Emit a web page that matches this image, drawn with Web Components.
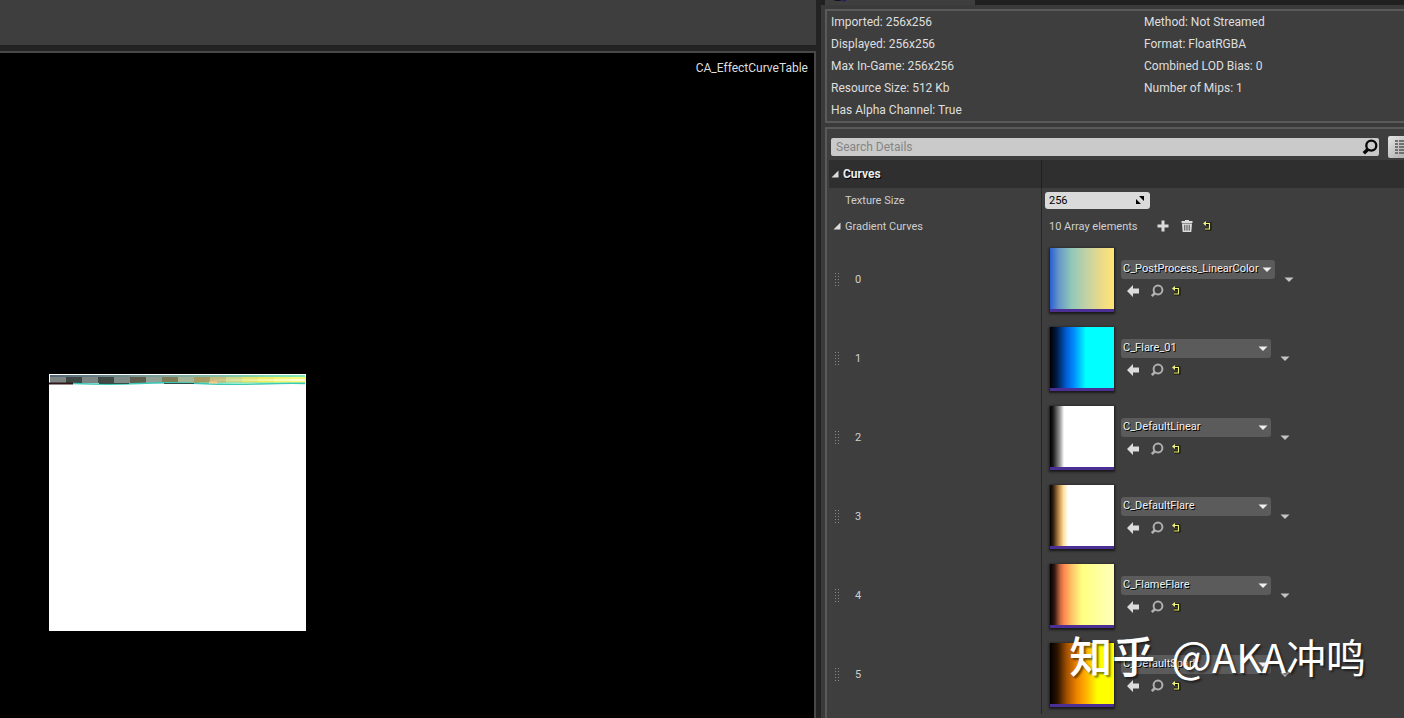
<!DOCTYPE html>
<html lang="en">
<head>
<meta charset="utf-8">
<title>CA_EffectCurveTable</title>
<style>
  html, body {
    margin: 0;
    height: 100%;
  }

  body {
    overflow: hidden;
    background: #232323;
    color: #dedede;
    font-family: Roboto, "Noto Sans CJK SC", sans-serif;
    font-size: 12px;
  }

  .brand {
    margin-right: 7px;
    font-size: 43px;
    font-weight: 500;
  }

  .at { font-size: 43px; }
</style>
</head>
<body>
<texture-editor>
  <texture-viewport slot="viewport" label="CA_EffectCurveTable"></texture-viewport>
  <texture-info slot="side">
    <span>Imported: 256x256</span>
    <span>Method: Not Streamed</span>
    <span>Displayed: 256x256</span>
    <span>Format: FloatRGBA</span>
    <span>Max In-Game: 256x256</span>
    <span>Combined LOD Bias: 0</span>
    <span>Resource Size: 512 Kb</span>
    <span>Number of Mips: 1</span>
    <span>Has Alpha Channel: True</span>
  </texture-info>
  <details-panel slot="side">
    <category-row>Curves</category-row>
    <property-row>
      <span slot="name">Texture Size</span>
      <number-box name="Texture Size" value="256"></number-box>
    </property-row>
    <property-row expandable>
      <span slot="name">Gradient Curves</span>
      <array-tools>10 Array elements</array-tools>
    </property-row>
    <curve-row index="0" curve="C_PostProcess_LinearColor" gradient="#2a5fd0, #6797c8 14%, #92c8b8 34%, #c4d2a4 58%, #eedc85 82%, #ffe574"></curve-row>
    <curve-row index="1" curve="C_Flare_01" gradient="#000, #001a40 10%, #0060d8 26%, #0090ff 38%, #00ffff 56%"></curve-row>
    <curve-row index="2" curve="C_DefaultLinear" gradient="#000, #1c1c1c 5%, #a0a0a0 16%, #fff 22%"></curve-row>
    <curve-row index="3" curve="C_DefaultFlare" gradient="#000, #302010 5%, #c08c4c 14%, #ffdf98 21%, #fff 28%"></curve-row>
    <curve-row index="4" curve="C_FlameFlare" gradient="#000, #301810 7%, #c86840 16%, #ff8850 22%, #ffc468 34%, #ffff80 50%, #ffffa0 76%, #ffffb8"></curve-row>
    <curve-row index="5" curve="C_DefaultSpark" gradient="#000, #301400 12%, #a05000 26%, #f08400 42%, #ffb000 56%, #ffff00 74%"></curve-row>
  </details-panel>
</texture-editor>
<water-mark><span class="brand">知乎</span> <span class="at">@</span>AKA冲鸣</water-mark>

<script>
const ICONS = {
  search: '<svg viewBox="0 0 16 16" width="16" height="16"><circle cx="9.3" cy="6.6" r="5" fill="none" stroke="currentColor" stroke-width="2.3"/><path d="M6 10.2 1.8 14.2" stroke="currentColor" stroke-width="3.4"/></svg>',
  find: '<svg viewBox="0 0 14 14" width="14" height="14"><circle cx="8" cy="6" r="4.4" fill="none" stroke="#b0b0b0" stroke-width="2"/><path d="M5 9 1.8 12.2" stroke="#b0b0b0" stroke-width="2.6"/></svg>',
  use: '<svg viewBox="0 0 14 14" width="14" height="14"><path d="M1 7 7 1V4.4H13V9.6H7V13Z" fill="currentColor"/></svg>',
  reset: '<svg viewBox="0 0 10 10" width="10" height="10"><path d="M3 3H8V8H3" fill="none" stroke="#141405" stroke-width="3"/><path d="M2 2.5H7.5V8H3" fill="none" stroke="#eef27c" stroke-width="1.2"/><path d="M4 0V5L1 2.5Z" fill="#eef27c"/></svg>',
  plus: '<svg viewBox="0 0 12 12" width="12" height="12"><path d="M4.5 .5H7.5V4.5H11.5V7.5H7.5V11.5H4.5V7.5H.5V4.5H4.5Z" fill="currentColor"/></svg>',
  trash: '<svg viewBox="0 0 12 14" width="12" height="14"><path d="M4 1H8V2H11.5V4H.5V2H4Z" fill="currentColor"/><path d="M1 4.6H11L10.3 13H1.7Z" fill="currentColor"/><path d="M3.8 5.8V11.6M6 5.8V11.6M8.2 5.8V11.6" stroke="#444"/></svg>',
  down: '<svg viewBox="0 0 10 6" width="10" height="6"><path d="M.5 .5H9.5L5 5Z" fill="currentColor"/></svg>',
  open: '<svg viewBox="0 0 8 8" width="8" height="8"><path d="M7.5 .5V7.5H.5Z" fill="currentColor"/></svg>',
  spin: '<svg viewBox="0 0 10 10" width="10" height="10"><path d="M4 1H9V6ZM1 4V9H6Z" fill="currentColor"/></svg>',
  list: '<svg viewBox="0 0 10 16" width="10" height="16"><path d="M1 2H4M1 5H4M1 8H4M1 11H4M1 14H4M5 2H10M5 5H10M5 8H10M5 11H10M5 14H10" stroke="#707070" stroke-width="2"/></svg>',
  grip: '<svg viewBox="0 0 5 14" width="5" height="14"><path d="M.5 0V14M3.5 0V14" stroke="#8a8a8a" stroke-dasharray="1 2"/></svg>'
};

const BUTTON_CSS = `
  button {
    display: flex;
    align-items: center;
    justify-content: center;
    margin: 0;
    padding: 0;
    border: 0;
    background: none;
    color: #dcdcdc;
  }
  svg { display: block; }
`;

class BaseElement extends HTMLElement {
  constructor() {
    super();
    this.attachShadow({ mode: 'open' });
  }

  connectedCallback() {
    this.shadowRoot.innerHTML = this.template();
  }
}

class TextureEditor extends BaseElement {
  template() {
    return `
      <style>
        :host {
          display: grid;
          grid-template-columns: minmax(0, 1fr) 583px;
          gap: 5px;
          height: 100vh;
        }
        main {
          display: flex;
          flex-direction: column;
          gap: 6px;
          min-width: 0;
        }
        .toolbar {
          height: 45px;
          background: #3e3e3e;
        }
        aside {
          display: flex;
          flex-direction: column;
          min-width: 0;
          min-height: 0;
          background: #3a3a3a;
        }
        .tabs {
          height: 5px;
          padding-left: 4px;
          background: #202020;
        }
        .tab {
          width: 150px;
          height: 5px;
          background: #3e3e3e;
        }
        .tab svg { display: block; margin-left: 8px; }
        .panels {
          display: flex;
          flex: 1;
          flex-direction: column;
          gap: 4px;
          min-height: 0;
          padding: 4px 0 0 4px;
        }
      </style>
      <main>
        <div class="toolbar"></div>
        <slot name="viewport"></slot>
      </main>
      <aside>
        <div class="tabs"><div class="tab">
          <svg viewBox="0 0 14 3" width="14" height="3"><path d="M0 0H7L9 1H3Z" fill="#131320"/><path d="M8 0H14L11 2Z" fill="#29245c"/></svg>
        </div></div>
        <div class="panels"><slot name="side"></slot></div>
      </aside>
    `;
  }
}

class TextureViewport extends BaseElement {
  // alternating 16px cells that brighten toward yellow on the right
  cells() {
    const colors = ['#7d8484', '#3f4746', '#7b8583', '#414944', '#7f8c88', '#5f5d4c', '#90a196', '#7f7c58',
      '#a5b597', '#a79c62', '#c5bd7d', '#cfd888', '#e3e56c', '#eeee66', '#f4f573', '#f7fa7c'];
    return colors.map((c, i) => `<rect x="${i * 16 + 1}" y="2" width="16" height="7" fill="${c}"/>`).join('');
  }

  template() {
    return `
      <style>
        :host {
          display: flex;
          flex: 1;
          flex-direction: column;
          min-height: 0;
          border: solid #484848;
          border-width: 2px 2px 0 0;
          background: #000;
        }
        .label {
          padding: 7px 6px 0 0;
          line-height: 16px;
          text-align: right;
        }
        svg { margin: 298px 0 0 49px; }
      </style>
      <div class="label">${this.getAttribute('label')}</div>
      <svg viewBox="0 0 257 257" width="257" height="257">
        <defs>
          <linearGradient id="line"><stop stop-color="#567"/><stop offset=".5" stop-color="#80aaa0"/><stop offset="1" stop-color="#80efba"/></linearGradient>
          <linearGradient id="glow"><stop offset=".6" stop-color="#fff" stop-opacity="0"/><stop offset="1" stop-color="#fff" stop-opacity=".7"/></linearGradient>
        </defs>
        <rect width="257" height="257" fill="#fff"/>
        ${this.cells()}
        <rect x="1" y="1" width="255" height="2" fill="url(#line)"/>
        <rect x="1" y="5" width="255" height="2" fill="url(#glow)"/>
        <path d="M150 9H256" stroke="#70efc0"/>
        <path d="M0 9.5H24" stroke="#301818" stroke-width="2"/>
        <path d="M24 9.5Q60 11 90 9.5T150 9.5T210 10T256 9.5" fill="none" stroke="#3cc8b8" stroke-width="1.4"/>
        <path d="M50 9.5H80M115 9.5H145" stroke="#31504a"/>
        <path d="M160 8.5H168" stroke="#ffc890" stroke-width="2"/>
      </svg>
    `;
  }
}

class TextureInfo extends BaseElement {
  template() {
    return `
      <style>
        :host {
          display: grid;
          grid-template-columns: 313px 1fr;
          border: solid #5a5a5a;
          border-width: 2px 0 2px 2px;
          padding-left: 4px;
          background: #3e3e3e;
          line-height: 22px;
        }
      </style>
      <slot></slot>
    `;
  }
}

class DetailsPanel extends BaseElement {
  template() {
    return `
      <style>
        ${BUTTON_CSS}
        :host {
          display: flex;
          flex: 1;
          flex-direction: column;
          min-height: 0;
          overflow: hidden;
          border: solid #5a5a5a;
          border-width: 2px 0 0 2px;
          background: #3e3e3e;
        }
        .bar {
          display: flex;
          align-items: center;
          gap: 9px;
          padding: 7px 0 2px 4px;
        }
        .search {
          display: flex;
          flex: 1;
          align-items: center;
          height: 18px;
          border-radius: 2px;
          background: #cacaca;
        }
        input {
          flex: 1;
          min-width: 0;
          padding: 0 5px;
          border: 0;
          outline: 0;
          background: none;
          font: inherit;
        }
        input::placeholder { color: #858585; }
        .search button { width: 18px; color: #080808; }
        .view {
          flex: none;
          justify-content: flex-end;
          width: 16px;
          height: 22px;
          border-radius: 2px 0 0 2px;
          background: linear-gradient(135deg, #e4e4e4, #b0b0b0);
        }
        .rows {
          flex: 1;
          min-height: 0;
          overflow: hidden;
          padding-left: 2px;
          font-size: 11px;
        }
      </style>
      <div class="bar">
        <div class="search">
          <input type="text" placeholder="Search Details" aria-label="Search Details">
          <button aria-label="Search">${ICONS.search}</button>
        </div>
        <button class="view" aria-label="View options">${ICONS.list}</button>
      </div>
      <div class="rows"><slot></slot></div>
    `;
  }
}

class CategoryRow extends BaseElement {
  template() {
    return `
      <style>
        ${BUTTON_CSS}
        :host {
          display: grid;
          grid-template-columns: 213px 1fr;
          height: 28px;
          background: #2f2f2f;
          color: #ececec;
          font-size: 12px;
          font-weight: bold;
          text-shadow: 1px 1px #000;
        }
        .name {
          display: flex;
          align-items: center;
          gap: 4px;
          padding-left: 2px;
          border-right: 1px solid #202020;
        }
      </style>
      <div class="name"><button aria-label="Collapse">${ICONS.open}</button><slot></slot></div>
    `;
  }
}

class PropertyRow extends BaseElement {
  template() {
    const arrow = this.hasAttribute('expandable')
      ? `<button aria-label="Collapse">${ICONS.open}</button>` : '';
    return `
      <style>
        ${BUTTON_CSS}
        :host {
          display: grid;
          grid-template-columns: 213px 1fr;
          height: 26px;
          color: #cfcfcf;
        }
        .name {
          display: grid;
          grid-template-columns: 8px 1fr;
          gap: 4px;
          align-items: center;
          padding: 0 0 2px 4px;
          border-right: 1px solid #262626;
        }
        .text { grid-column: 2; }
        .value {
          display: flex;
          align-items: center;
          padding: 0 0 2px 3px;
        }
      </style>
      <div class="name">${arrow}<div class="text"><slot name="name"></slot></div></div>
      <div class="value"><slot></slot></div>
    `;
  }
}

class NumberBox extends BaseElement {
  template() {
    return `
      <style>
        :host {
          display: flex;
          align-items: center;
          box-sizing: border-box;
          width: 105px;
          height: 17px;
          padding-right: 5px;
          border-radius: 3px;
          background: #dadada;
          color: #000;
        }
        input {
          flex: 1;
          min-width: 0;
          padding: 0 4px;
          border: 0;
          outline: 0;
          background: none;
          color: #000;
          font: inherit;
        }
      </style>
      <input type="text" aria-label="${this.getAttribute('name')}" value="${this.getAttribute('value')}">
      ${ICONS.spin}
    `;
  }
}

class ArrayTools extends BaseElement {
  template() {
    return `
      <style>
        ${BUTTON_CSS}
        :host {
          display: flex;
          align-items: center;
          padding-left: 4px;
        }
        .tools {
          display: flex;
          align-items: center;
          gap: 12px;
          padding-left: 19px;
        }
        .reset { margin-left: -3px; }
      </style>
      <slot></slot>
      <div class="tools">
        <button aria-label="Add element">${ICONS.plus}</button>
        <button aria-label="Remove all">${ICONS.trash}</button>
        <button class="reset" aria-label="Reset">${ICONS.reset}</button>
      </div>
    `;
  }
}

class CurveRow extends BaseElement {
  template() {
    const index = this.getAttribute('index');
    const curve = this.getAttribute('curve');
    return `
      <style>
        ${BUTTON_CSS}
        :host {
          display: grid;
          grid-template-columns: 213px 1fr;
          height: 79px;
          color: #cfcfcf;
        }
        .name {
          display: flex;
          align-items: center;
          gap: 15px;
          padding-left: 6px;
          border-right: 1px solid #262626;
        }
        .value {
          display: flex;
          align-items: center;
          padding-left: 8px;
        }
        .thumb {
          width: 64px;
          height: 61px;
          border-bottom: 3px solid #4b2f94;
          background: linear-gradient(90deg, ${this.getAttribute('gradient')});
          box-shadow: 0 1px 2px 1px #1a1a1a;
        }
        .asset {
          display: flex;
          flex-direction: column;
          gap: 5px;
          padding: 0 9px 2px 7px;
        }
        .combo {
          position: relative;
          display: flex;
        }
        select {
          appearance: none;
          min-width: 150px;
          height: 19px;
          margin: 0;
          padding: 0 16px 2px 2px;
          border: 0;
          border-radius: 3px;
          outline: 0;
          background: #5b5b5b;
          color: #f0f0f0;
          font: inherit;
          text-shadow: 1px 1px #000;
        }
        .combo svg {
          position: absolute;
          top: 7px;
          right: 3px;
          color: #eee;
          pointer-events: none;
        }
        .tools {
          display: flex;
          align-items: center;
          gap: 10px;
          padding-left: 5px;
        }
        .reset { margin-left: -3px; }
        .more { color: #c4c4c4; }
      </style>
      <div class="name">${ICONS.grip}<span>${index}</span></div>
      <div class="value">
        <div class="thumb"></div>
        <div class="asset">
          <div class="combo">
            <select aria-label="Curve ${index}"><option>${curve}</option></select>
            ${ICONS.down}
          </div>
          <div class="tools">
            <button aria-label="Use selected">${ICONS.use}</button>
            <button aria-label="Browse">${ICONS.find}</button>
            <button class="reset" aria-label="Reset">${ICONS.reset}</button>
          </div>
        </div>
        <button class="more" aria-label="Element menu">${ICONS.down}</button>
      </div>
    `;
  }
}

class WaterMark extends BaseElement {
  template() {
    return `
      <style>
        :host {
          position: absolute;
          right: 38px;
          bottom: 32px;
          color: #fff;
          font-family: "Noto Sans CJK SC", sans-serif;
          font-size: 40px;
          line-height: 60px;
          text-shadow: 2px 2px 2px rgba(0, 0, 0, .5);
          white-space: nowrap;
          pointer-events: none;
        }
      </style>
      <slot></slot>
    `;
  }
}

customElements.define('texture-editor', TextureEditor);
customElements.define('texture-viewport', TextureViewport);
customElements.define('texture-info', TextureInfo);
customElements.define('details-panel', DetailsPanel);
customElements.define('category-row', CategoryRow);
customElements.define('property-row', PropertyRow);
customElements.define('number-box', NumberBox);
customElements.define('array-tools', ArrayTools);
customElements.define('curve-row', CurveRow);
customElements.define('water-mark', WaterMark);
</script>
</body>
</html>
